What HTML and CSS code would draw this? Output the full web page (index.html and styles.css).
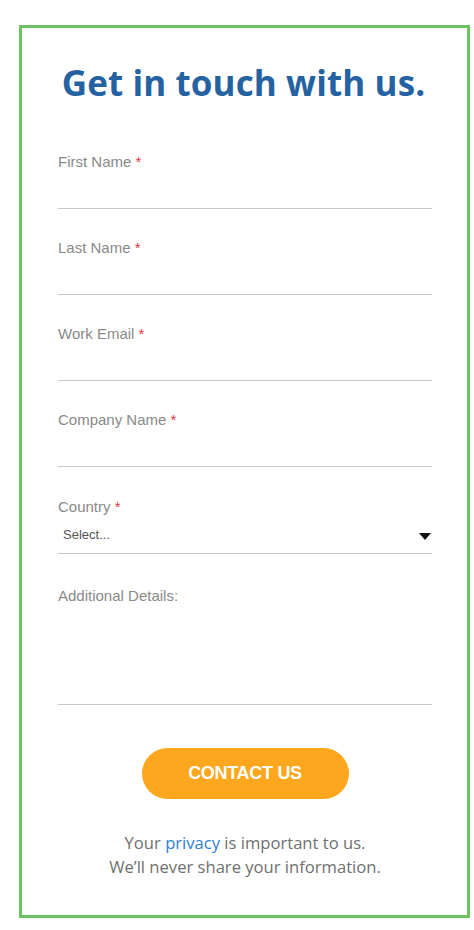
FILE: index.html
```html
<!DOCTYPE html>
<html>
<head>
<meta charset="utf-8">
<link rel="stylesheet" href="styles.css">
</head>
<body>
<div class="card">
  <h1 class="title">Get in touch with us.</h1>
  <form class="form">
    <div class="field">
      <label class="label">First Name <span class="req">*</span></label>
      <div class="input"></div>
    </div>
    <div class="field">
      <label class="label">Last Name <span class="req">*</span></label>
      <div class="input"></div>
    </div>
    <div class="field">
      <label class="label">Work Email <span class="req">*</span></label>
      <div class="input"></div>
    </div>
    <div class="field">
      <label class="label">Company Name <span class="req">*</span></label>
      <div class="input"></div>
    </div>
    <div class="field field-select">
      <label class="label">Country <span class="req">*</span></label>
      <div class="select">
        <span class="select-text">Select...</span>
        <svg class="caret" width="12" height="7" viewBox="0 0 12 7"><path d="M0 0 H12 L6 7 Z" fill="#111"/></svg>
      </div>
    </div>
    <div class="field field-area">
      <label class="label">Additional Details:</label>
      <div class="textarea"></div>
    </div>
    <div class="actions">
      <button type="button" class="btn">CONTACT US</button>
    </div>
    <p class="privacy">Your <a class="link">privacy</a> is important to us.<br>We’ll never share your information.</p>
  </form>
</div>
</body>
</html>
```
FILE: styles.css
```css
html, body {
  margin: 0;
  padding: 0;
  background: #fff;
}
.card {
  box-sizing: border-box;
  margin: 25px 0 0 19px;
  width: 451px;
  height: 893px;
  border: 3px solid #6cc161;
  padding: 0 35px 0 36px;
}
.title {
  margin: 31px 0 0;
  padding-right: 3px;
  font-family: "Open Sans", sans-serif;
  font-weight: 700;
  font-size: 35px;
  line-height: 48px;
  color: #2562a2;
  text-align: center;
  letter-spacing: 0.1px;
}
.form {
  margin-top: 46px;
  display: flex;
  flex-direction: column;
}
.field {
  display: flex;
  flex-direction: column;
  height: 86px;
}
.label {
  font-family: "Liberation Sans", Arial, sans-serif;
  font-size: 15px;
  line-height: 18px;
  color: #8a8a8a;
}
.req {
  color: #e2373f;
}
.input {
  height: 37px;
  border-bottom: 1px solid #c8c8c8;
}
.field-select {
  margin-top: 1px;
  height: 89px;
}
.select {
  height: 37px;
  border-bottom: 1px solid #c8c8c8;
  display: flex;
  align-items: center;
  justify-content: space-between;
  padding: 0 1px 0 5px;
}
.select-text {
  font-family: "Liberation Sans", Arial, sans-serif;
  font-size: 13px;
  color: #555;
}
.caret {
  margin-top: 4px;
}
.field-area {
  height: auto;
}
.textarea {
  height: 99px;
  border-bottom: 1px solid #c8c8c8;
}
.actions {
  display: flex;
  justify-content: center;
  margin-top: 43px;
}
.btn {
  width: 207px;
  height: 51px;
  border: none;
  border-radius: 26px;
  background: #fca71e;
  color: #fff;
  font-family: "Liberation Sans", Arial, sans-serif;
  font-weight: 700;
  font-size: 18px;
  letter-spacing: -0.3px;
  padding: 0;
}
.privacy {
  margin: 32px 0 0;
  text-align: center;
  font-family: "Open Sans", sans-serif;
  font-size: 16.6px;
  line-height: 24px;
  color: #707070;
}
.link {
  color: #2f7ed2;
}
```
